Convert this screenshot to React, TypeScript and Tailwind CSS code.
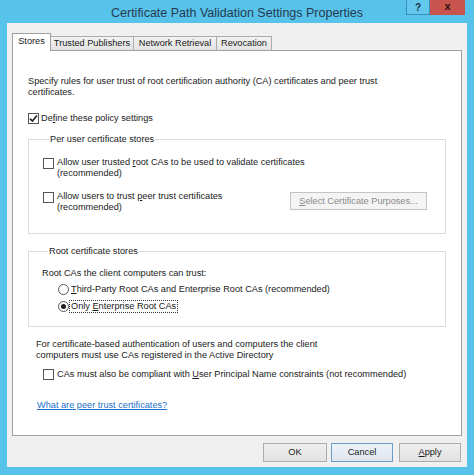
import React from "react";

const font = { fontFamily: '"Segoe UI", "Liberation Sans", Arial, sans-serif' };

function CheckBox({ checked = false }: { checked?: boolean }) {
  return (
    <span className="relative shrink-0 w-[11px] h-[11px] border border-[#555555] bg-white flex items-center justify-center">
      {checked && (
        <svg width="9" height="9" viewBox="0 0 9 9" className="block">
          <path d="M1 4.6 L3.4 7 L8 1.6" fill="none" stroke="#222" strokeWidth="1.6" />
        </svg>
      )}
    </span>
  );
}

function Radio({ checked = false }: { checked?: boolean }) {
  return (
    <span className="shrink-0 w-[11px] h-[11px] rounded-full border border-[#5a5a5a] bg-white flex items-center justify-center">
      {checked && <span className="w-[5px] h-[5px] rounded-full bg-[#1f1f1f]" />}
    </span>
  );
}

function Tab({ label, active = false, w }: { label: string; active?: boolean; w: string }) {
  return active ? (
    <div
      className={`${w} h-[18px] -mb-px relative z-10 bg-white border border-b-0 border-[#a0a0a0] flex items-start justify-center pt-[2px] whitespace-nowrap`}
    >
      {label}
    </div>
  ) : (
    <div
      className={`${w} h-[14px] bg-gradient-to-b from-[#f2f2f2] to-[#e4e4e4] border border-b-0 border-l-0 border-[#acacac] flex items-center justify-center whitespace-nowrap`}
    >
      {label}
    </div>
  );
}

function Button({ children, w, focused = false }: { children: React.ReactNode; w: string; focused?: boolean }) {
  return (
    <div
      className={`${w} h-[19px] flex items-center justify-center text-[#1a1a1a] border ${
        focused ? "border-[#6c9ccc] bg-gradient-to-b from-[#ecf2f8] to-[#dfe6ee]" : "border-[#acacac] bg-gradient-to-b from-[#efefef] to-[#e2e2e2]"
      }`}
    >
      {children}
    </div>
  );
}

export default function App() {
  return (
    <div className="w-[474px] h-[475px] bg-[#58c3ea] flex flex-col text-[#1a1a1a] text-[9.2px] leading-[11px]" style={font}>
      {/* title bar */}
      <div className="relative h-[23px] shrink-0 flex items-center justify-center">
        <span className="text-[12.5px] leading-[16px] text-[#253a50] mt-[2px]">
          Certificate Path Validation Settings Properties
        </span>
        <div className="absolute top-0 right-[9px] flex">
          <div className="w-[24px] h-[15px] border border-t-0 border-[#3a8fba] bg-[#62c8ee] flex items-center justify-center text-[10px] font-bold text-[#1d2f45]">
            ?
          </div>
          <div className="w-[35px] h-[15px] bg-[#c9534d] flex items-center justify-center text-[11px] font-bold leading-none text-[#2b1010] pb-[2px]">
            x
          </div>
        </div>
      </div>

      {/* client area */}
      <div className="mx-[7px] flex-1 bg-[#f0f0f0] flex flex-col">
        <div className="mt-[9px] pl-[5px] flex items-end h-[18px]">
          <Tab label="Stores" active w="w-[39px]" />
          <Tab label="Trusted Publishers" w="w-[83px]" />
          <Tab label="Network Retrieval" w="w-[83px]" />
          <Tab label="Revocation" w="w-[55px]" />
        </div>

        <div className="mx-[5px] flex-1 bg-white border border-[#a0a0a0] pl-[15px] pr-[15px] pt-[25px] flex flex-col">
          <p>
            Specify rules for user trust of root certification authority (CA) certificates and peer trust
            <br />
            certificates.
          </p>

          <label className="mt-[14px] flex items-center h-[13px] gap-[2px]">
            <CheckBox checked />
            <span>
              De<span className="underline">f</span>ine these policy settings
            </span>
          </label>

          {/* per user stores */}
          <fieldset className="mt-[9px] border border-[#dcdcdc] pl-[14px] pr-[18px] pb-[20px]">
            <legend className="ml-[6px] px-[1px]">Per user certificate stores</legend>
            <div className="mt-[12px] flex items-start gap-[3px]">
              <span className="mt-[1px]">
                <CheckBox />
              </span>
              <span>
                Allow user trusted <span className="underline">r</span>oot CAs to be used to validate certificates
                <br />
                (recommended)
              </span>
            </div>
            <div className="mt-[12px] flex items-start justify-between">
              <div className="flex items-start gap-[3px]">
                <span className="mt-[1px]">
                  <CheckBox />
                </span>
                <span>
                  Allow users to trust <span className="underline">p</span>eer trust certificates
                  <br />
                  (recommended)
                </span>
              </div>
              <div className="mt-[1px] w-[137px] h-[18px] border border-[#c4c4c4] bg-[#f4f4f4] text-[#8a8a8a] flex items-center justify-center">
                <span>
                  <span className="underline">S</span>elect Certificate Purposes...
                </span>
              </div>
            </div>
          </fieldset>

          {/* root stores */}
          <fieldset className="mt-[12px] border border-[#dcdcdc] pl-[13px] pb-[11px]">
            <legend className="ml-[6px] px-[1px]">Root certificate stores</legend>
            <p className="mt-[11px]">Root CAs the client computers can trust:</p>
            <div className="mt-[2px] pl-[16px] flex flex-col">
              <div className="h-[17px] flex items-center gap-[2px]">
                <Radio />
                <span>
                  <span className="underline">T</span>hird-Party Root CAs and Enterprise Root CAs (recommended)
                </span>
              </div>
              <div className="h-[17px] flex items-center gap-[1px]">
                <Radio checked />
                <span className="outline outline-1 outline-dotted outline-[#333] px-[1px]">
                  Only <span className="underline">E</span>nterprise Root CAs
                </span>
              </div>
            </div>
          </fieldset>

          <p className="mt-[12px] ml-[8px]">
            For certificate-based authentication of users and computers the client
            <br />
            computers must use CAs registered in the Active Directory
          </p>

          <div className="mt-[8px] ml-[15px] flex items-center gap-[3px]">
            <CheckBox />
            <span>
              CAs must also be compliant with <span className="underline">U</span>ser Principal Name constraints (not recommended)
            </span>
          </div>

          <a className="mt-[20px] ml-[9px] self-start text-[#1d6fcb] underline">What are peer trust certificates?</a>
        </div>

        <div className="mt-[7px] mb-[5px] pr-[6px] flex justify-end">
          <Button w="w-[64px]">OK</Button>
          <span className="w-[4px]" />
          <Button w="w-[62px]" focused>
            Cancel
          </Button>
          <span className="w-[6px]" />
          <Button w="w-[62px]">
            <span>
              <span className="underline">A</span>pply
            </span>
          </Button>
        </div>
      </div>
      <div className="h-[8px] shrink-0" />
    </div>
  );
}
